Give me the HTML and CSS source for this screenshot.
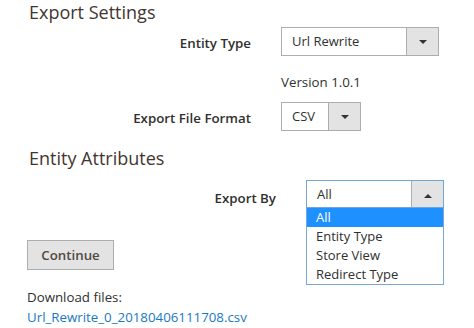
FILE: index.html
```html
<!DOCTYPE html>
<html>
<head>
<meta charset="utf-8">
<link rel="stylesheet" href="styles.css">
</head>
<body>
<div class="page">
  <h2 class="title">Export Settings</h2>
  <div class="form form-settings">
    <div class="label">Entity Type</div>
    <div class="select wide"><span class="value">Url Rewrite</span><span class="arrow"><span class="tri down"></span></span></div>
    <div class="label"></div>
    <div class="note">Version 1.0.1</div>
    <div class="label">Export File Format</div>
    <div class="select narrow"><span class="value">CSV</span><span class="arrow"><span class="tri down"></span></span></div>
  </div>
  <h2 class="title title-attr">Entity Attributes</h2>
  <div class="form form-attr">
    <div class="label">Export By</div>
    <div class="select-wrap">
      <div class="select open"><span class="value">All</span><span class="arrow"><span class="tri up"></span></span></div>
      <ul class="options">
        <li class="selected">All</li>
        <li>Entity Type</li>
        <li>Store View</li>
        <li>Redirect Type</li>
      </ul>
    </div>
  </div>
  <button class="btn">Continue</button>
  <div class="download">
    <div class="dl-label">Download files:</div>
    <a class="dl-link" href="#">Url_Rewrite_0_20180406111708.csv</a>
  </div>
</div>
</body>
</html>
```

FILE: styles.css
```css
* { box-sizing: border-box; }
body {
  margin: 0;
  font-family: "Open Sans", "Noto Sans", sans-serif;
  color: #303030;
  background: #fff;
}
.page {
  padding: 0 0 0 27px;
}
.title {
  margin: 0;
  padding-left: 2px;
  font-size: 18px;
  font-weight: 400;
  color: #41362f;
  line-height: 24px;
}
.form {
  display: grid;
  align-items: center;
}
.form-settings {
  grid-template-columns: 224px auto;
  column-gap: 30px;
  margin-top: 3px;
}
.label {
  text-align: right;
  font-size: 13.3px;
  font-weight: 600;
  color: #303030;
}
.form-settings .label { padding-top: 3px; }
.form-attr .label { padding-top: 8px; }
.note {
  font-size: 13.3px;
  line-height: 18px;
  padding-top: 17px;
  padding-bottom: 11px;
  color: #303030;
}
.select {
  display: flex;
  height: 29px;
  border: 1px solid #adadad;
  background: #fff;
  font-size: 13px;
  color: #303030;
}
.select .value {
  flex: 1;
  padding-left: 10px;
  line-height: 27px;
}
.select .arrow {
  width: 32px;
  background: #e3e3e3;
  border-left: 1px solid #adadad;
  display: flex;
  align-items: center;
  justify-content: center;
}
.wide { width: 158px; }
.narrow { width: 80px; }
.tri {
  width: 0; height: 0;
  border-left: 4px solid transparent;
  border-right: 4px solid transparent;
}
.tri.down { border-top: 4px solid #333; }
.tri.up { border-bottom: 4px solid #333; margin-top: 4px; }
.title-attr {
  margin-top: 15px;
}
.form-attr {
  grid-template-columns: 249px auto;
  column-gap: 30px;
  margin-top: 10px;
}
.select-wrap {
  position: relative;
  width: 138px;
}
.select.open {
  width: 138px;
  height: 28px;
  border-color: #6fa7db;
}
.select.open .value { line-height: 26px; }
.select.open .arrow { border-left-color: #adadad; }
.options {
  position: absolute;
  left: 0;
  top: 28px;
  width: 138px;
  margin: 0;
  padding: 0;
  list-style: none;
  border: 1px solid #7aa7d8;
  border-top: none;
  background: #fff;
  font-size: 13px;
  z-index: 2;
}
.options li {
  height: 19px;
  line-height: 19px;
  padding-left: 9px;
  color: #303030;
}
.options li.selected {
  background: #1e90ff;
  color: #fff;
}
.btn {
  margin-top: 32px;
  display: block;
  width: 87px;
  height: 30px;
  border: 1px solid #adadad;
  background: #e3e3e3;
  font-family: inherit;
  font-size: 13.3px;
  font-weight: 600;
  color: #514943;
  padding: 0;
}
.download {
  margin-top: 17px;
  font-size: 13.3px;
  line-height: 20px;
}
.dl-label { color: #303030; }
.dl-link {
  color: #1979c3;
  text-decoration: none;
}
```
